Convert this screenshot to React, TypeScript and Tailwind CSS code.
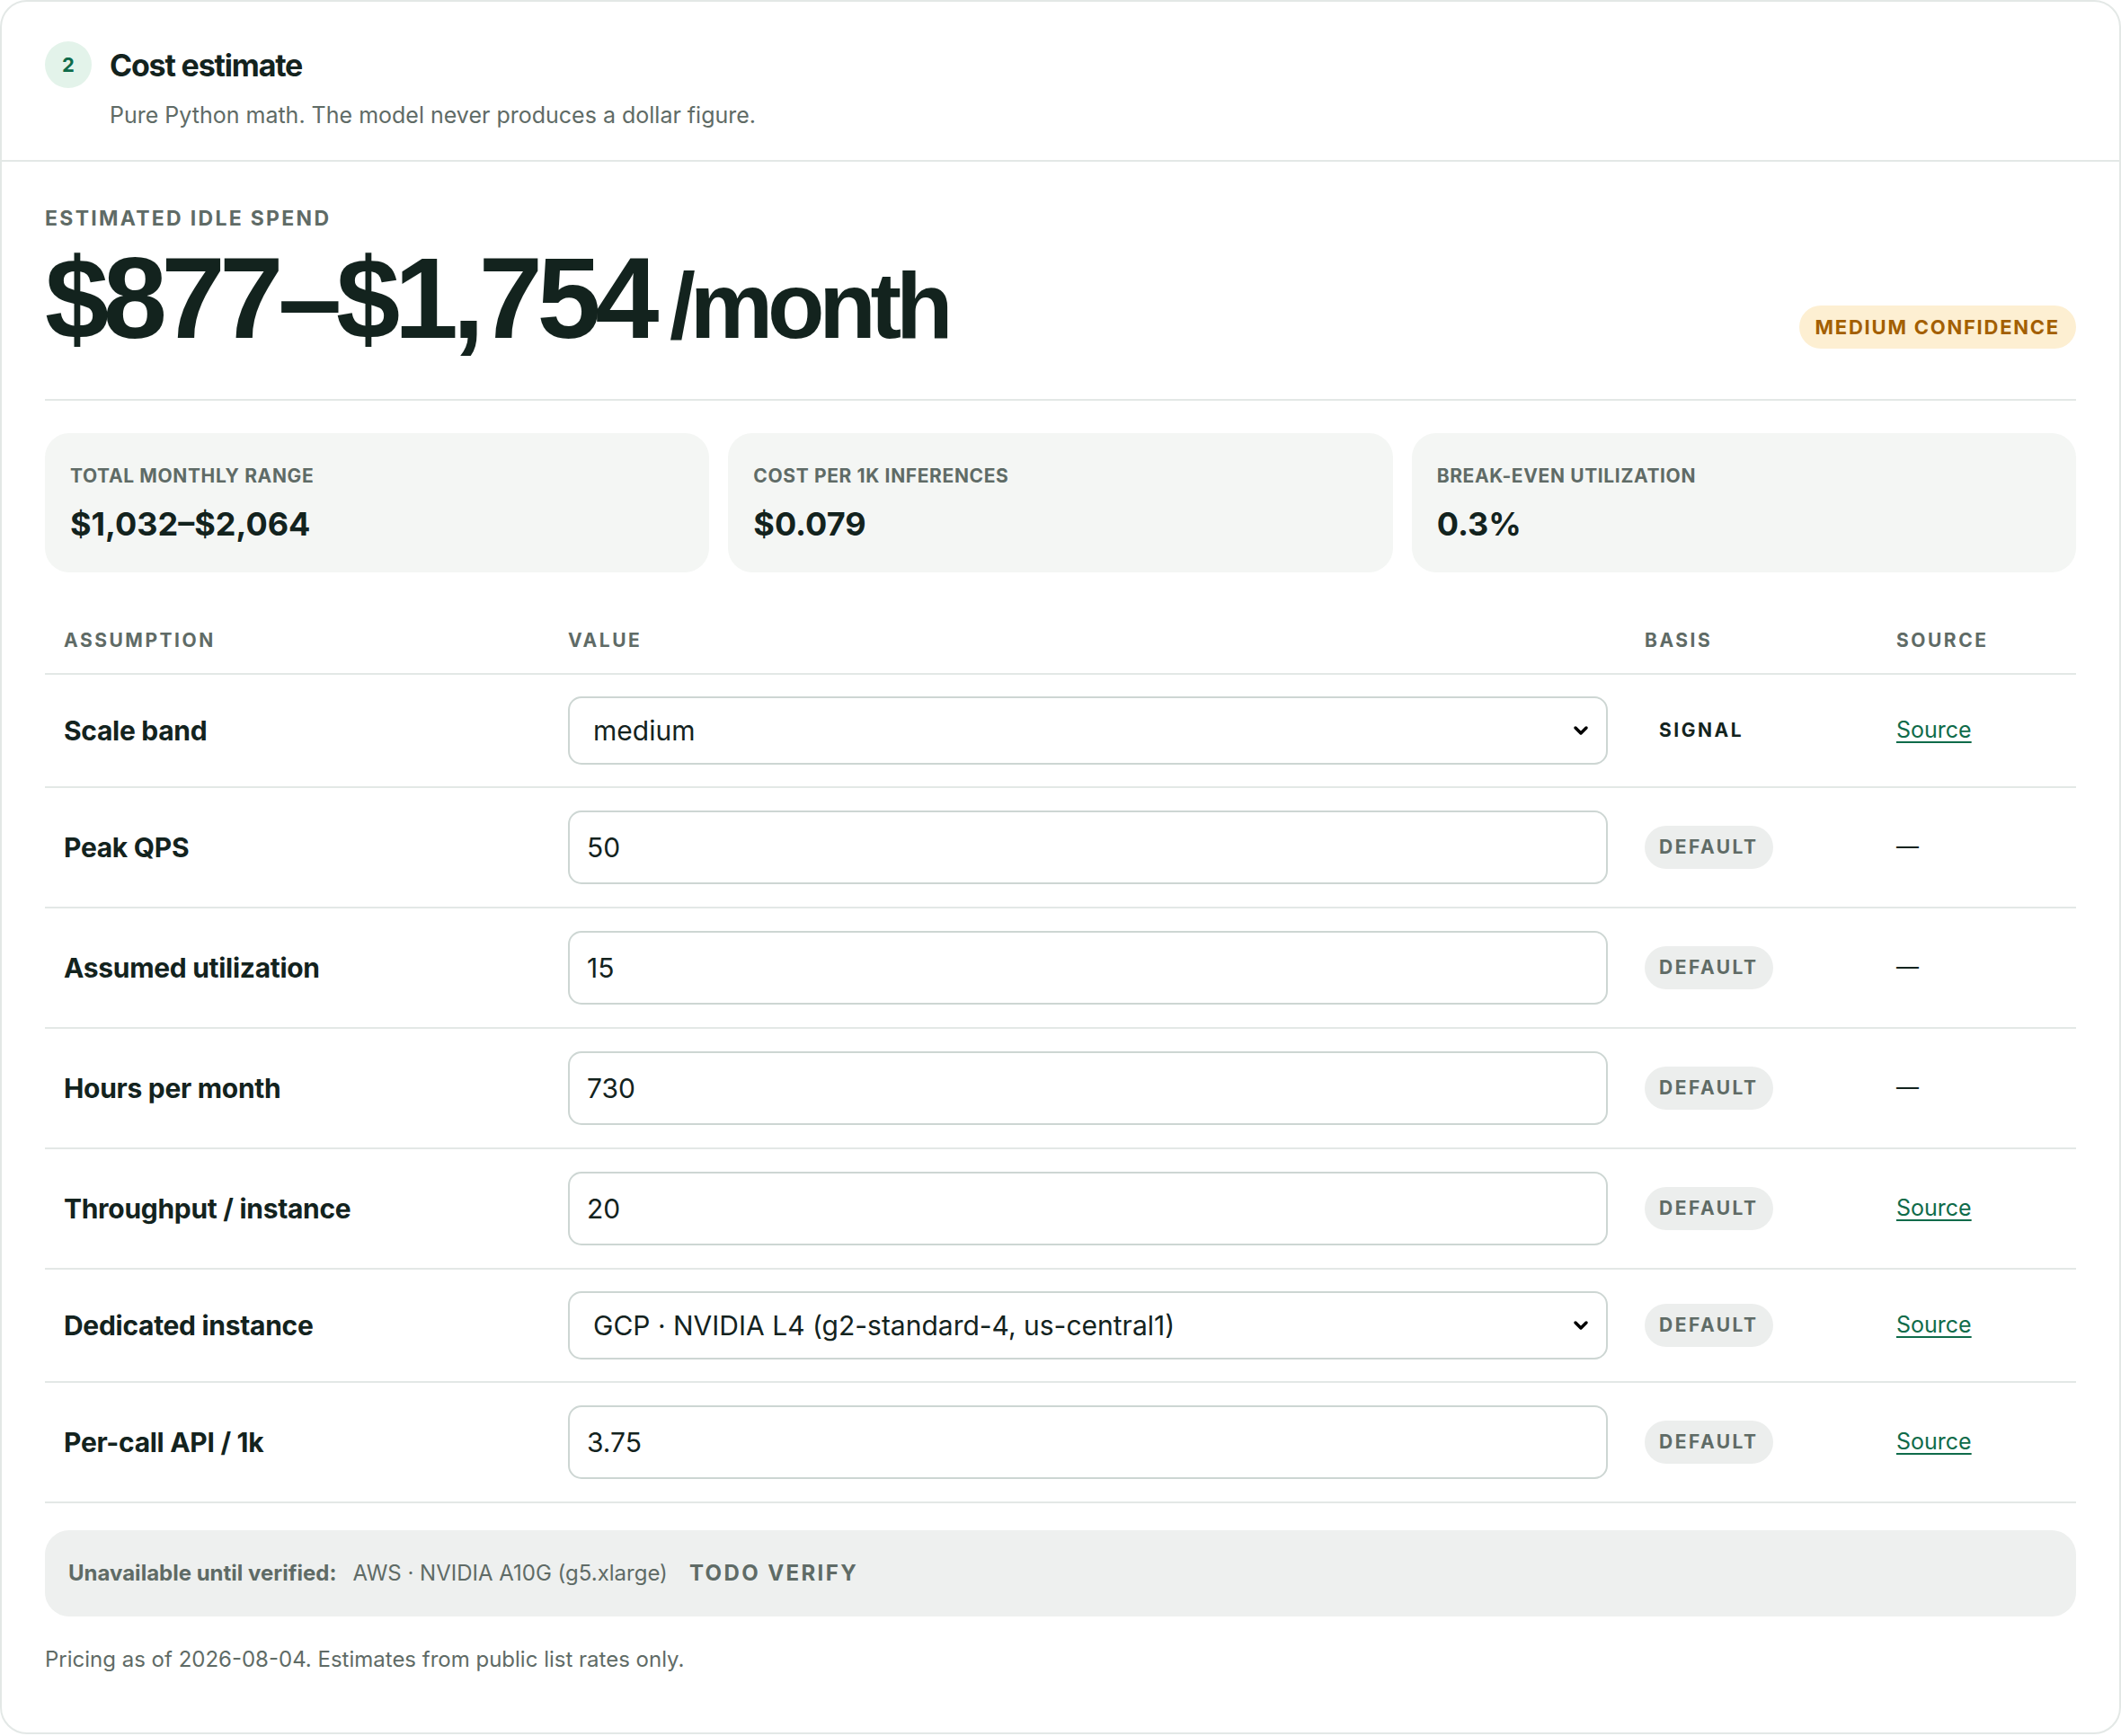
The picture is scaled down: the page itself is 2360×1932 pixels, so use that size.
import React from "react";
import { ChevronDown } from "lucide-react";

const rows = [
  { label: "Scale band", kind: "select", value: "medium", basis: "SIGNAL", source: true },
  { label: "Peak QPS", kind: "input", value: "50", basis: "DEFAULT", source: false },
  { label: "Assumed utilization", kind: "input", value: "15", basis: "DEFAULT", source: false },
  { label: "Hours per month", kind: "input", value: "730", basis: "DEFAULT", source: false },
  { label: "Throughput / instance", kind: "input", value: "20", basis: "DEFAULT", source: true },
  { label: "Dedicated instance", kind: "select", value: "GCP · NVIDIA L4 (g2-standard-4, us-central1)", basis: "DEFAULT", source: true },
  { label: "Per-call API / 1k", kind: "input", value: "3.75", basis: "DEFAULT", source: true },
];

const stats = [
  { label: "TOTAL MONTHLY RANGE", value: "$1,032–$2,064" },
  { label: "COST PER 1K INFERENCES", value: "$0.079" },
  { label: "BREAK-EVEN UTILIZATION", value: "0.3%" },
];

export default function App() {
  return (
    <div className="w-[2360px] h-[1932px] bg-white text-[#13231e]" style={{ fontFamily: "Inter, 'Liberation Sans', sans-serif" }}>
      <div className="h-[1930px] border-2 border-[#e3e8e6] rounded-[30px] flex flex-col">
        {/* header */}
        <div className="px-[48px] pt-[44px] pb-[30px] border-b-2 border-[#e3e8e6]">
          <div className="flex items-center gap-[20px]">
            <div className="w-[52px] h-[52px] rounded-full bg-[#e3f3ea] text-[#0f6b4a] flex items-center justify-center text-[22px] font-bold">2</div>
            <div className="text-[34px] font-bold tracking-[-0.035em]">Cost estimate</div>
          </div>
          <div className="pl-[72px] mt-[12px] text-[25px] text-[#5f6b66]">Pure Python math. The model never produces a dollar figure.</div>
        </div>

        <div className="px-[48px] pt-[46px]">
          <div className="text-[23px] font-bold tracking-[0.1em] text-[#5f6b66]">ESTIMATED IDLE SPEND</div>
          <div className="flex items-end justify-between pb-[48px] border-b-2 border-[#e3e8e6] mt-[8px]">
            <div className="flex items-baseline gap-[18px] leading-none" style={{ fontFamily: "'Liberation Sans', Arial, sans-serif" }}>
              <span className="text-[128px] font-bold tracking-[-0.05em]">$877–$1,754</span>
              <span className="text-[104px] font-bold tracking-[-0.06em]">/month</span>
            </div>
            <div className="h-[48px] px-[18px] rounded-full bg-[#fdefd2] text-[#a35f00] text-[22px] font-bold tracking-[0.08em] flex items-center mb-[8px]">MEDIUM CONFIDENCE</div>
          </div>

          <div className="grid grid-cols-3 gap-[21px] mt-[36px]">
            {stats.map((s) => (
              <div key={s.label} className="h-[155px] rounded-[27px] bg-[#f4f6f4] px-[28px] pt-[32px]">
                <div className="text-[21px] font-bold tracking-[0.03em] text-[#5f6b66]">{s.label}</div>
                <div className="text-[36px] font-bold mt-[10px]">{s.value}</div>
              </div>
            ))}
          </div>

          <div className="mt-[34px]">
            <div className="grid grid-cols-[582px_1198px_280px_1fr] h-[80px] items-center border-b-2 border-[#e3e8e6] text-[21px] font-bold tracking-[0.12em] text-[#5f6b66] pt-[6px]">
              <div className="pl-[21px]">ASSUMPTION</div>
              <div>VALUE</div>
              <div>BASIS</div>
              <div>SOURCE</div>
            </div>
            {rows.map((r) => (
              <div key={r.label} className={`grid grid-cols-[582px_1198px_280px_1fr] items-center border-b-2 border-[#e3e8e6] ${r.kind === "select" ? "py-[24px]" : "py-[25px]"}`}>
                <div className="pl-[21px] text-[30px] font-bold tracking-[-0.01em]">{r.label}</div>
                <div className="pr-[41px]">
                  {r.kind === "select" ? (
                    <div className="h-[76px] rounded-[15px] border-2 border-[#cdd6d3] flex items-center justify-between pl-[26px] pr-[16px] text-[30px]">
                      <span>{r.value}</span>
                      <ChevronDown size={24} strokeWidth={3.5} color="#000" />
                    </div>
                  ) : (
                    <div className="h-[82px] rounded-[15px] border-2 border-[#cdd6d3] flex items-center pl-[19px] text-[30px]">{r.value}</div>
                  )}
                </div>
                <div>
                  {r.basis === "SIGNAL" ? (
                    <span className="pl-[16px] text-[21px] font-bold tracking-[0.12em] text-[#13231e]">SIGNAL</span>
                  ) : (
                    <span className="inline-flex h-[48px] px-[16px] rounded-full bg-[#eceeed] items-center text-[21px] font-bold tracking-[0.12em] text-[#5f6b66]">DEFAULT</span>
                  )}
                </div>
                <div className="text-[25px]">
                  {r.source ? (
                    <span className="text-[#0f6b4a] underline underline-offset-[4px]">Source</span>
                  ) : (
                    <span>—</span>
                  )}
                </div>
              </div>
            ))}
          </div>

          <div className="mt-[30px] h-[96px] rounded-[27px] bg-[#eef0ef] flex items-center px-[26px] text-[24px] text-[#5f6b66]">
            <span className="font-bold">Unavailable until verified:</span>
            <span className="ml-[18px]">AWS · NVIDIA A10G (g5.xlarge)</span>
            <span className="ml-[24px] font-bold tracking-[0.1em]">TODO VERIFY</span>
          </div>

          <div className="mt-[30px] text-[24px] text-[#5f6b66]">Pricing as of 2026-08-04. Estimates from public list rates only.</div>
        </div>
      </div>
    </div>
  );
}
